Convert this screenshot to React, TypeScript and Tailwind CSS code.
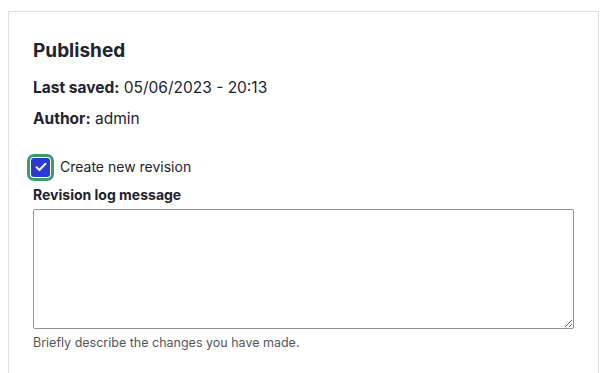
import React from 'react'

const App = () => {
  return (
    <div
      className="min-h-screen bg-white pl-2 pr-[10px] pt-[11px] text-[#222330]"
      style={{ fontFamily: 'Inter, "Liberation Sans", sans-serif' }}
    >
      <div className="border border-[#dedfe4] px-6 pt-[27px] pb-8 min-h-[400px]">
        {/* Status */}
        <h3 className="text-[19px] font-bold leading-6 mb-[13px]">Published</h3>
        <div className="text-[15.5px] leading-6 mb-[7px]">
          <span className="font-bold">Last saved:</span> 05/06/2023 - 20:13
        </div>
        <div className="text-[15.5px] leading-6">
          <span className="font-bold">Author:</span> admin
        </div>

        {/* Revision */}
        <label className="mt-[26px] flex items-center gap-[10px] text-[14px] leading-5">
          <span className="flex items-center justify-center w-[19px] h-[19px] rounded-[3px] bg-[#2a3bd1] outline-[3px] outline-solid outline-[#3a9f63] outline-offset-1 -ml-[2px]">
            <svg width="12" height="10" viewBox="0 0 12 10" fill="none">
              <path d="M1.5 5.2 4.4 8 10.5 1.8" stroke="white" strokeWidth="2" strokeLinecap="round" strokeLinejoin="round" />
            </svg>
          </span>
          Create new revision
        </label>
        <div className="mt-[8px] text-[14px] font-bold leading-5">Revision log message</div>
        <textarea
          className="mt-[4px] block w-full h-[120px] border border-[#8e929c] rounded-[2px] bg-white"
        />
        <div className="mt-[4px] text-[12.5px] leading-5 text-[#55565b]">
          Briefly describe the changes you have made.
        </div>
      </div>
    </div>
  )
}

export default App
